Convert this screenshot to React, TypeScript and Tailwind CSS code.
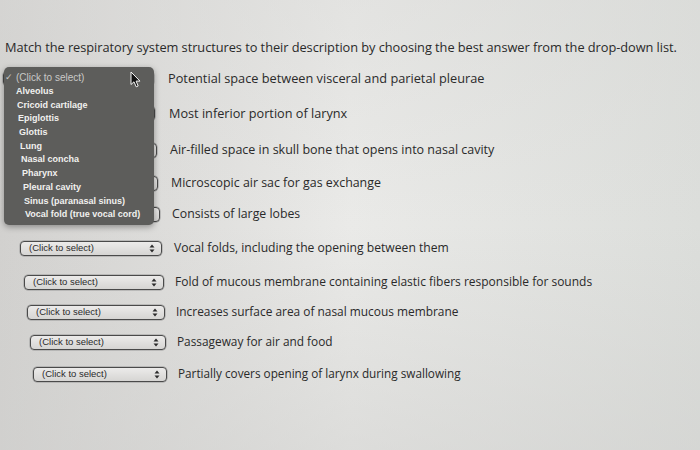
import React from 'react';

type Row = {
  text: string;
  spacing: string;
  select: string;
  gap: string;
  size: string;
  covered?: boolean;
};

// Each row drifts a little to the right and shrinks slightly as the list goes down
const rows: Row[] = [
  { text: 'Potential space between visceral and parietal pleurae', spacing: 'mt-[13px]', select: 'ml-[3px] w-[151px]', gap: 'ml-[14px]', size: 'text-[12.75px]', covered: true },
  { text: 'Most inferior portion of larynx', spacing: 'mt-[15px]', select: 'ml-[7px] w-[148px]', gap: 'ml-[14px]', size: 'text-[12.7px]', covered: true },
  { text: 'Air-filled space in skull bone that opens into nasal cavity', spacing: 'mt-[17px]', select: 'ml-[10px] w-[147px]', gap: 'ml-[13px]', size: 'text-[12.5px]', covered: true },
  { text: 'Microscopic air sac for gas exchange', spacing: 'mt-[13px]', select: 'ml-[13px] w-[145px]', gap: 'ml-[13px]', size: 'text-[12.4px]', covered: true },
  { text: 'Consists of large lobes', spacing: 'mt-[11px]', select: 'ml-[17px] w-[143px]', gap: 'ml-[12px]', size: 'text-[12.3px]', covered: true },
  { text: 'Vocal folds, including the opening between them', spacing: 'mt-[14px]', select: 'ml-[20px] w-[142px]', gap: 'ml-[12px]', size: 'text-[12.15px]' },
  { text: 'Fold of mucous membrane containing elastic fibers responsible for sounds', spacing: 'mt-[14px]', select: 'ml-[24px] w-[140px]', gap: 'ml-[11px]', size: 'text-[12px]' },
  { text: 'Increases surface area of nasal mucous membrane', spacing: 'mt-[10px]', select: 'ml-[27px] w-[138px]', gap: 'ml-[11px]', size: 'text-[11.9px]' },
  { text: 'Passageway for air and food', spacing: 'mt-[10px]', select: 'ml-[30px] w-[136px]', gap: 'ml-[11px]', size: 'text-[11.85px]' },
  { text: 'Partially covers opening of larynx during swallowing', spacing: 'mt-[12px]', select: 'ml-[33px] w-[134px]', gap: 'ml-[11px]', size: 'text-[11.75px]' },
];

const options: { label: string; indent: string }[] = [
  { label: 'Alveolus', indent: 'ml-[12px]' },
  { label: 'Cricoid cartilage', indent: 'ml-[13px]' },
  { label: 'Epiglottis', indent: 'ml-[14px]' },
  { label: 'Glottis', indent: 'ml-[15px]' },
  { label: 'Lung', indent: 'ml-[16px]' },
  { label: 'Nasal concha', indent: 'ml-[17px]' },
  { label: 'Pharynx', indent: 'ml-[18px]' },
  { label: 'Pleural cavity', indent: 'ml-[19px]' },
  { label: 'Sinus (paranasal sinus)', indent: 'ml-[20px]' },
  { label: 'Vocal fold (true vocal cord)', indent: 'ml-[21px]' },
];

const Stepper = () => (
  <svg width="6" height="9" viewBox="0 0 6 9" className="shrink-0">
    <path d="M3 0.5 L5.5 3.5 H0.5 Z" fill="#2b2b2b" />
    <path d="M3 8.5 L5.5 5.5 H0.5 Z" fill="#2b2b2b" />
  </svg>
);

const SelectBox: React.FC<{ className: string; covered?: boolean }> = ({ className, covered }) => (
  <div
    className={`${className} h-[15px] shrink-0 flex items-center justify-between pl-[8px] pr-[6px] rounded-[4px] border border-[#4a4a4a] bg-linear-to-b from-[#ecebea] to-[#d6d5d3] shadow-[0_0_0_0.5px_#9a9a9a]`}
  >
    {/* the open list sits over the top selects, so their label is never seen */}
    {!covered && (
      <span className="text-[9.5px] leading-none font-medium text-[#2a2a2a]" style={{ fontFamily: '"Liberation Sans", Arial, sans-serif' }}>
        (Click to select)
      </span>
    )}
    <Stepper />
  </div>
);

const Cursor = () => (
  <svg width="11" height="17" viewBox="0 0 11 17" className="absolute left-[130px] top-[71px]">
    <path
      d="M1 1 L1 13.5 L4 10.8 L6.2 15.8 L8.2 15 L6.1 10.1 L10 10.1 Z"
      fill="#111"
      stroke="#f4f4f4"
      strokeWidth="1"
      strokeLinejoin="round"
    />
  </svg>
);

export default function App() {
  return (
    <div
      className="relative w-[700px] h-[450px] overflow-hidden bg-linear-to-r from-[#d2d1cf] via-[#eaeae8] to-[#dcdedb] text-[#2e2e2e]"
      style={{ fontFamily: '"Open Sans", "Liberation Sans", Arial, sans-serif' }}
    >
      <div className="absolute inset-0 bg-linear-to-b from-[#d9d9d7]/40 via-transparent to-[#cfcfcd]/50" />

      <div className="relative pt-[39px]">
        <p className="ml-[5px] text-[12.8px] leading-[16px] tracking-[-0.05px] whitespace-nowrap text-[#2a2a2a]">
          Match the respiratory system structures to their description by choosing the best answer from the drop-down list.
        </p>

        <div className="flex flex-col">
          {rows.map((row) => (
            <div key={row.text} className={`${row.spacing} h-5 flex items-center`}>
              <SelectBox className={row.select} covered={row.covered} />
              <span className={`${row.gap} ${row.size} leading-none whitespace-nowrap text-[#2a2a2a]`}>{row.text}</span>
            </div>
          ))}
        </div>
      </div>

      {/* open option list of the first select */}
      <div
        className="absolute left-[4px] top-[67px] w-[150px] h-[158px] rounded-[5px] bg-[#5d5d5b] shadow-[0_2px_6px_rgba(0,0,0,0.35)] pt-[4px]"
        style={{ fontFamily: '"Liberation Sans", Arial, sans-serif' }}
      >
        <div className="flex items-center h-[13.7px] leading-none text-[#c9c9c7]">
          <span className="ml-[1px] w-[11px] text-[9px]">✓</span>
          <span className="text-[10px]">(Click to select)</span>
        </div>
        {options.map((opt) => (
          <div key={opt.label} className="flex items-center h-[13.7px]">
            <span className={`${opt.indent} text-[9px] leading-none font-bold text-[#f1f1ef]`}>{opt.label}</span>
          </div>
        ))}
      </div>

      <Cursor />
    </div>
  );
}
